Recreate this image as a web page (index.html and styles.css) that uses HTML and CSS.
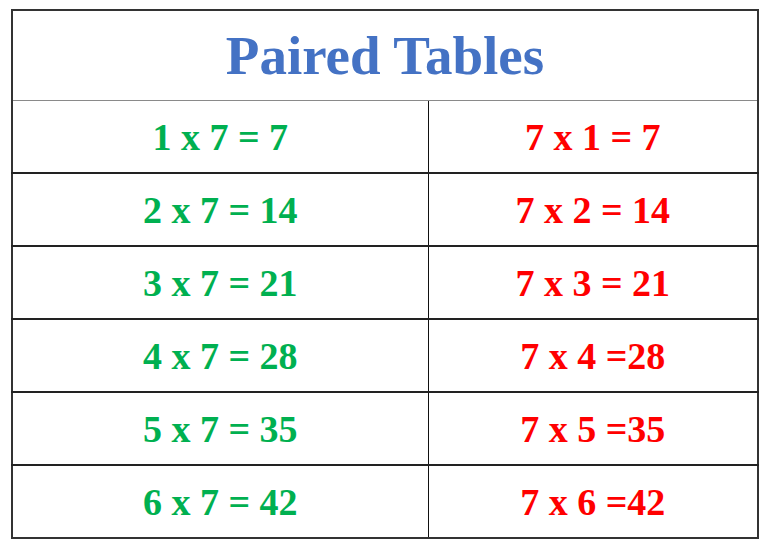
FILE: index.html
```html
<!DOCTYPE html>
<html>
<head>
<meta charset="utf-8">
<link rel="stylesheet" href="styles.css">
</head>
<body>
<table class="paired">
  <colgroup><col class="col-left"><col class="col-right"></colgroup>
  <tr><th class="title" colspan="2">Paired Tables</th></tr>
  <tr><td class="g">1 x 7 = 7</td><td class="r">7 x 1 = 7</td></tr>
  <tr><td class="g">2 x 7 = 14</td><td class="r">7 x 2 = 14</td></tr>
  <tr><td class="g">3 x 7 = 21</td><td class="r">7 x 3 = 21</td></tr>
  <tr><td class="g">4 x 7 = 28</td><td class="r">7 x 4 =28</td></tr>
  <tr><td class="g">5 x 7 = 35</td><td class="r">7 x 5 =35</td></tr>
  <tr><td class="g">6 x 7 = 42</td><td class="r">7 x 6 =42</td></tr>
</table>
</body>
</html>
```
FILE: styles.css
```css
html, body {
  margin: 0;
  padding: 0;
  background: #ffffff;
}
body {
  padding: 9px 0 0 11px;
  font-family: "Liberation Serif", "Times New Roman", serif;
}
.paired {
  border-collapse: collapse;
  width: 746px;
  table-layout: fixed;
  border: 2px solid #333333;
}
.col-left {
  width: 416px;
}
.col-right {
  width: 330px;
}
.paired th, .paired td {
  padding: 0;
  text-align: center;
  font-weight: bold;
}
.title {
  height: 89px;
  font-size: 55px;
  color: #4472c4;
  border-bottom: 1px solid #8a8a8a;
  line-height: 1;
  padding-top: 2px;
}
.paired td {
  height: 71px;
  font-size: 38px;
  border-top: 2px solid #222222;
  border-right: 1px solid #111111;
  line-height: 1;
}
.paired tr:nth-child(2) td {
  border-top: none;
}
.paired td.g {
  color: #00b050;
}
.paired td.r {
  color: #ff0000;
}
```
